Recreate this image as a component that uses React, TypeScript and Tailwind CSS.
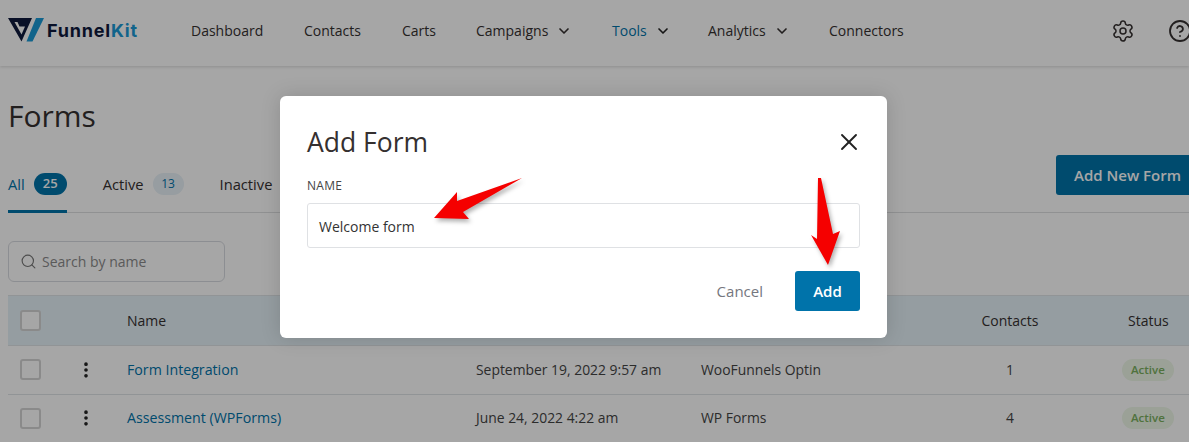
import React from 'react';
import { ChevronDown, Settings, CircleHelp, Search, X, EllipsisVertical } from 'lucide-react';

const nav = [
  { label: 'Dashboard', w: 'w-[113px]' },
  { label: 'Contacts', w: 'w-[98px]' },
  { label: 'Carts', w: 'w-[74px]' },
  { label: 'Campaigns', w: 'w-[136px]', caret: true },
  { label: 'Tools', w: 'w-[96px]', caret: true, active: true },
  { label: 'Analytics', w: 'w-[121px]', caret: true },
  { label: 'Connectors', w: 'w-[90px]' },
];

const rows = [
  { name: 'Form Integration', date: 'September 19, 2022 9:57 am', type: 'WooFunnels Optin', contacts: 1 },
  { name: 'Assessment (WPForms)', date: 'June 24, 2022 4:22 am', type: 'WP Forms', contacts: 4 },
];

const Logo = () => (
  <div className="flex items-center w-[183px] shrink-0">
    <svg width="38" height="26" viewBox="0 0 38 26" className="shrink-0">
      <path d="M0 0H24L13.5 23.5Z M6.5 4L13.5 16.5L17 8.5H11.5L9.5 4Z" fill="#0f1a3c" fillRule="evenodd" />
      <path d="M28 0H36L24.5 23.5H18.5Z" fill="#1b9ad6" />
    </svg>
    <span className="ml-[1px] font-['Inter',sans-serif] text-[18px] font-bold tracking-[0.8px] text-[#0f1a3c]">
      Funnel<span className="text-[#1b9ad6]">Kit</span>
    </span>
  </div>
);

const Checkbox = () => <div className="w-[21px] h-[21px] rounded-[3px] border-2 border-[#d5d5d5] bg-white" />;

export default function App() {
  return (
    <div className="relative w-[1189px] h-[442px] overflow-hidden bg-white font-['Open_Sans',sans-serif] text-[#353030]">
      <header className="flex items-center h-[66px] pl-2 pb-[5px] shadow-[0_1px_3px_rgba(0,0,0,0.15)]">
        <Logo />
        <nav className="flex items-center text-sm">
          {nav.map((n) => (
            <div key={n.label} className={`flex items-center gap-2 ${n.w} ${n.active ? 'text-[#0073aa]' : ''}`}>
              {n.label}
              {n.caret && <ChevronDown size={16} strokeWidth={2.5} className={n.active ? 'text-[#222]' : ''} />}
            </div>
          ))}
        </nav>
        <div className="ml-auto flex items-center gap-[33px] mr-[-3px]">
          <Settings size={24} strokeWidth={1.5} />
          <CircleHelp size={24} strokeWidth={1.8} />
        </div>
      </header>

      <main className="pl-2">
        <h1 className="mt-[30px] text-[30px] leading-[40px] font-medium">Forms</h1>

        <div className="mt-[16px] flex items-start h-[61px] border-b border-[#dedfe1]">
          <div className="flex items-start gap-[36px] text-[14.7px] h-full">
            <div className="flex items-start gap-[9px] h-[61px] pt-[21px] border-b-[3px] border-[#0073aa] text-[#0073aa]">
              <span className="leading-[22px]">All</span>
              <span className="w-[33px] h-[22px] rounded-full bg-[#0073aa] text-white text-[13px] font-semibold flex items-center justify-center">25</span>
            </div>
            <div className="flex items-start gap-[9px] pt-[21px]">
              <span className="leading-[22px]">Active</span>
              <span className="w-[31px] h-[22px] rounded-full bg-[#e8f1f7] text-[#0073aa] text-xs flex items-center justify-center">13</span>
            </div>
            <div className="pt-[21px] leading-[22px]">Inactive</div>
          </div>
          <button className="ml-auto mr-[-10px] mt-[3px] w-[143px] h-[40px] rounded-[3px] bg-[#0073aa] text-white text-[15px] font-semibold">
            Add New Form
          </button>
        </div>

        <div className="mt-[28px] flex items-center gap-[5px] w-[217px] h-[41px] pl-[11px] rounded-[6px] border border-[#d8dbe0] text-sm text-[#8b8b8b]">
          <Search size={17} strokeWidth={1.6} className="text-[#777]" />
          Search by name
        </div>

        <div className="mt-[13px] w-[1300px] text-sm">
          <div className="grid grid-cols-[119px_349px_225px_200px_218px_auto] items-center h-[51px] bg-[#e5f1f7] border-y border-[#dfe3e6]">
            <div className="pl-3"><Checkbox /></div>
            <div className="font-medium">Name</div>
            <div />
            <div />
            <div className="text-center font-medium">Contacts</div>
            <div className="pl-[9px] font-medium">Status</div>
          </div>
          {rows.map((r) => (
            <div key={r.name} className="grid grid-cols-[119px_349px_225px_200px_218px_auto] items-center h-[48.5px] border-b border-[#dfe3e6] text-[13.9px] text-[#444]">
              <div className="flex items-center pl-3">
                <Checkbox />
                <EllipsisVertical size={20} strokeWidth={2.4} className="ml-[35px] text-[#222]" />
              </div>
              <div className="text-[14.2px] font-medium text-[#0073aa]">{r.name}</div>
              <div>{r.date}</div>
              <div>{r.type}</div>
              <div className="text-center">{r.contacts}</div>
              <div className="pl-[3px]">
                <span className="inline-flex items-center h-[22px] px-[9px] rounded-full bg-[#eef8e8] text-[#7bb05f] text-[11.5px] font-semibold">Active</span>
              </div>
            </div>
          ))}
        </div>
      </main>

      <div className="absolute inset-0 bg-black/35 pl-[280px] pt-[96px]">
        <div className="w-[607px] h-[242px] rounded-[6px] bg-white px-[27px] pt-[28px] shadow-[0_0_20px_rgba(0,0,0,0.15)]">
          <div className="flex items-center justify-between">
            <h2 className="text-[26.5px] leading-[36px] font-medium text-[#353030]">Add Form</h2>
            <X size={28} strokeWidth={1.6} className="mr-[-3px] text-[#222]" />
          </div>
          <div className="mt-[18px] text-xs leading-[16px] tracking-[0.3px] text-[#444]">NAME</div>
          <div className="mt-[9px] flex items-center h-[45px] pl-[11px] pt-[2px] rounded-[3px] border border-[#dfe1e4] text-sm text-[#333]">Welcome form</div>
          <div className="mt-[23px] flex items-center justify-end gap-[32px]">
            <span className="text-[15px] text-[#757780]">Cancel</span>
            <button className="w-[65px] h-[40px] rounded-[3px] bg-[#0073aa] text-white text-[15px] font-semibold">Add</button>
          </div>
        </div>
      </div>

      <svg width="1189" height="442" className="absolute inset-0 pointer-events-none drop-shadow-[2px_3px_2px_rgba(0,0,0,0.3)]">
        <polygon points="522,178 457,201 457,192 434,218 469,219 463,212" fill="#f50000" />
        <polygon points="818,178 821,178 833,234 840,231 828,265 811,235 817,239" fill="#f50000" />
      </svg>
    </div>
  );
}
